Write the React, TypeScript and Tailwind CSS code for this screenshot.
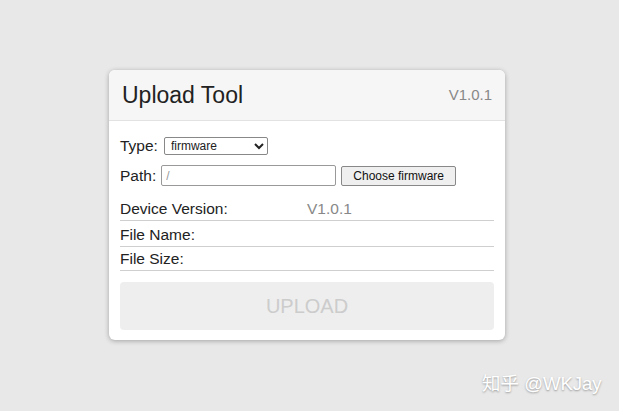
import React from "react";

export default function App() {
  return (
    <div className="relative w-[619px] h-[411px] bg-[#e8e8e8] font-['Liberation_Sans',Arial,sans-serif] overflow-hidden">
      <div className="pt-[70px] pl-[109px]">
        <div className="w-[396px] h-[270px] bg-white rounded-[6px] shadow-[0_1px_5px_rgba(0,0,0,0.3)] overflow-hidden">
          {/* header */}
          <div className="h-[51px] bg-[#f6f6f6] border-b border-[#e2e2e2] flex items-center justify-between pl-[13px] pr-[13px]">
            <span className="text-[23px] text-[#222]">Upload Tool</span>
            <span className="text-[15px] text-[#888]">V1.0.1</span>
          </div>

          <div className="pl-[11px] pr-[11px] pt-[15px] text-[15.5px] text-[#222]">
            <div className="flex items-center h-[19px]">
              <span>Type:</span>
              <select className="ml-[6px] w-[104px] h-[18px] border border-[#888] rounded-[2px] text-[12px] pl-[2px] bg-white font-['Liberation_Sans',Arial,sans-serif]">
                <option>firmware</option>
              </select>
            </div>
            <div className="flex items-center h-[21px] mt-[10px]">
              <span>Path:</span>
              <input
                defaultValue="/"
                className="ml-[5px] w-[175px] h-[21px] border border-[#999] rounded-[2px] text-[12px] pl-[4px] text-[#999] outline-none"
              />
              <button className="ml-[5px] w-[115px] h-[20px] border border-[#888] rounded-[2px] bg-[#efefef] text-[12px] text-[#111]">
                Choose firmware
              </button>
            </div>

            <div className="mt-[13px]">
              <div className="flex items-end h-[22px] pb-0 border-b border-[#cfcfcf]">
                <span className="w-[187px]">Device Version:</span>
                <span className="text-[#888]">V1.0.1</span>
              </div>
              <div className="flex items-end h-[26px] pb-0 border-b border-[#cfcfcf]">
                <span>File Name:</span>
              </div>
              <div className="flex items-end h-[24px] pb-0 border-b border-[#cfcfcf]">
                <span>File Size:</span>
              </div>
            </div>

            <button className="mt-[11px] w-full h-[48px] rounded-[4px] bg-[#eeeeee] text-[20px] text-[#cccccc]">
              UPLOAD
            </button>
          </div>
        </div>
      </div>

      <div className="absolute left-[482px] top-[370px] text-[18.5px] text-white [text-shadow:0_1px_2px_rgba(0,0,0,0.35)] font-['Liberation_Sans','Noto_Sans_CJK_SC',sans-serif]">
        知乎 @WKJay
      </div>
    </div>
  );
}
